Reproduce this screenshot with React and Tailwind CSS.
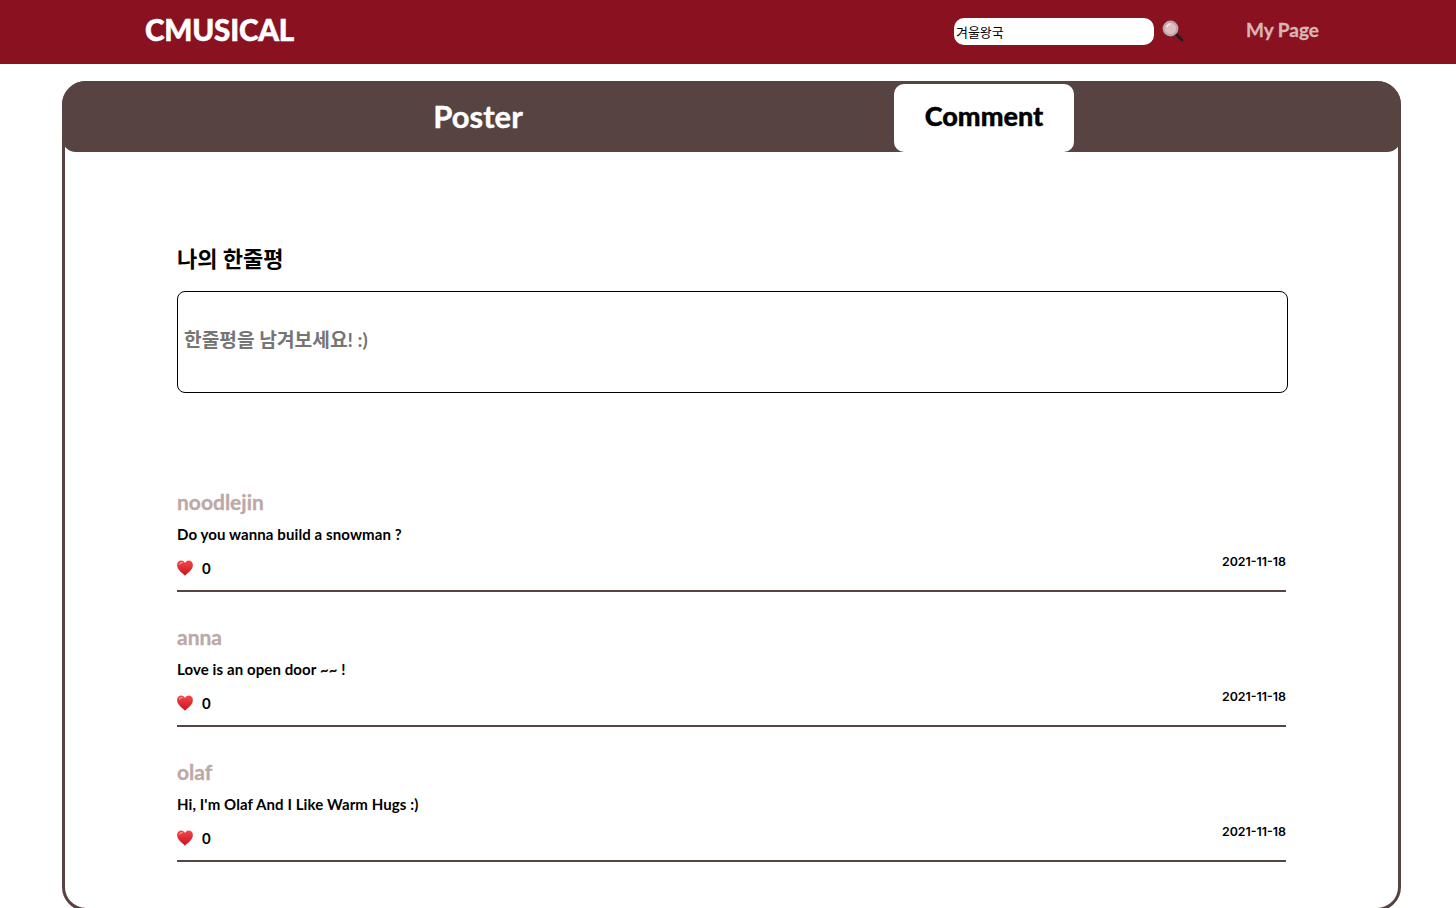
const FONT = "font-['Lato','Noto_Sans_CJK_KR',sans-serif]";

const COMMENTS = [
  { id: 1, user: 'noodlejin', text: 'Do you wanna build a snowman ?', likes: 0, date: '2021-11-18' },
  { id: 2, user: 'anna', text: 'Love is an open door ~~ !', likes: 0, date: '2021-11-18' },
  { id: 3, user: 'olaf', text: "Hi, I'm Olaf And I Like Warm Hugs :)", likes: 0, date: '2021-11-18' },
];

function SearchIcon() {
  return (
    <svg width="22" height="22" viewBox="0 0 22 22" aria-hidden="true">
      <line x1="14" y1="14" x2="20" y2="20" stroke="#2a1a1c" strokeWidth="3" strokeLinecap="round" />
      <circle cx="8.500" cy="8.500" r="6.800" fill="#e3bcc0" stroke="#b5a8aa" strokeWidth="2.200" />
      <path d="M4.800 7A4.500 4.500 0 0 1 8.500 4" fill="none" stroke="#f6e6e8" strokeWidth="1.400" />
    </svg>
  );
}

function Heart() {
  return (
    <svg width="16" height="16" viewBox="0 0 16 16" aria-hidden="true">
      <defs>
        <linearGradient id="heart-fill" x1="0" y1="0" x2="0" y2="1">
          <stop offset="0" stopColor="#f2474a" />
          <stop offset="1" stopColor="#c9141f" />
        </linearGradient>
      </defs>
      <path
        d="M8 15.800C6.800 14 .1 10.200.1 5 .1 2.400 2 .6 4.300.6 5.900.6 7.300 1.500 8 3 8.700 1.500 10.100.6 11.700.6 14 .6 15.900 2.400 15.900 5 15.900 10.200 9.200 14 8 15.800Z"
        fill="url(#heart-fill)"
      />
      <path d="M2.600 4C3.100 3 4.100 2.400 5.200 2.600" fill="none" stroke="#fb9a9a" strokeWidth="1.200" strokeLinecap="round" />
    </svg>
  );
}

function CommentRow({ comment }) {
  return (
    <li className="mb-[31px] flex h-[104px] w-[1109px] items-end justify-between border-b-2 border-[#564342] pb-[12px]">
      <div>
        <div className="h-[28px] text-[21px] leading-[24px] font-bold text-[#bda8a8] [-webkit-text-stroke:0.3px_#bda8a8]">{comment.user}</div>
        <p className="mt-[6px] h-[20px] text-[15px] leading-[20px] font-bold tracking-[0.1px] text-black">{comment.text}</p>
        <div className="mt-[14px] flex h-[20px] items-center gap-[9px] text-[15px] font-bold text-black">
          <Heart />
          <span>{comment.likes}</span>
        </div>
      </div>
      <span className="mb-[7px] font-['Inter',sans-serif] text-[12.400px] leading-[18px] font-semibold text-black">{comment.date}</span>
    </li>
  );
}

export default function App() {
  return (
    <div className={`h-[908px] overflow-hidden bg-white ${FONT}`}>
      <header className="flex h-[64px] items-center bg-[#8a1120] pr-[137px] pl-[145px]">
        <h1 className="mb-[5px] text-[29.600px] leading-none font-black tracking-[-0.2px] text-white [-webkit-text-stroke:0.5px_white]">CMUSICAL</h1>
        <div className="mb-[3px] ml-auto flex items-center">
          <input
            readOnly
            value="겨울왕국"
            className="mt-[1px] h-[27px] w-[200px] rounded-[10px] bg-white pl-[2px] text-[13px] text-black outline-none"
          />
          <span className="ml-[8px] flex"><SearchIcon /></span>
          <a className="ml-[62px] text-[19px] font-bold text-[#d9b5b8] [-webkit-text-stroke:0.3px_#d9b5b8]">My Page</a>
        </div>
      </header>

      <main className="mx-[62px] mt-[17px] h-[830px] w-[1339px] rounded-[24px] border-[3px] border-[#564342]">
        <nav className="-mt-[3px] -mr-[3px] -ml-[3px] flex h-[71px] items-end rounded-t-[24px] rounded-b-[14px] bg-[#564342] pl-[326px]">
          <button className="flex h-[68px] w-[180px] items-center justify-center pb-[3px] text-[31px] font-bold text-white [-webkit-text-stroke:0.4px_white]">Poster</button>
          <button className="ml-[326px] flex h-[68px] w-[180px] items-center justify-center rounded-[10px] bg-white pb-[3px] text-[27px] font-black text-black [-webkit-text-stroke:0.4px_black]">Comment</button>
        </nav>

        <section className="px-[112px] pt-[91px]">
          <h2 className="h-[32px] text-[22px] leading-[32px] font-bold text-black">나의 한줄평</h2>
          <textarea
            readOnly
            placeholder="한줄평을 남겨보세요! :)"
            className="mt-[16px] block h-[102px] w-[1111px] resize-none rounded-[8px] border border-black px-[6px] pt-[34px] text-[19.200px] leading-[28px] font-bold outline-none placeholder:text-[#757575]"
          />
          <ul className="mt-[95px]">
            {COMMENTS.map(c => (
              <CommentRow key={c.id} comment={c} />
            ))}
          </ul>
        </section>
      </main>
    </div>
  );
}
